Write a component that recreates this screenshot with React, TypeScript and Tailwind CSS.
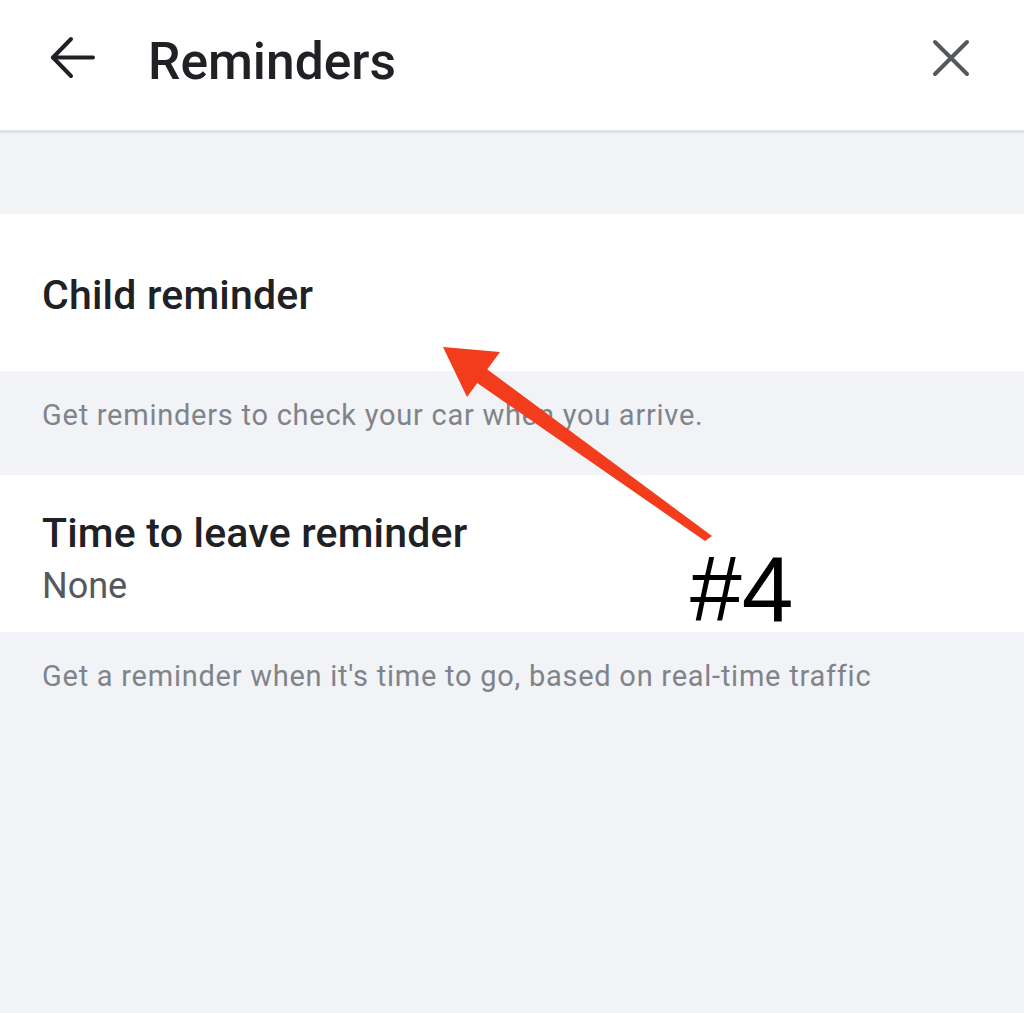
import React from "react";

function Annotation() {
  return (
    <svg
      className="absolute left-0 top-0 pointer-events-none"
      width="1024"
      height="1013"
      viewBox="0 0 1024 1013"
    >
      {/* tapered shaft */}
      <polygon points="712,536 705,541 470,378 480,364" fill="#f23c1c" />
      {/* head */}
      <polygon points="443,347 500,352 467,397" fill="#f23c1c" />
    </svg>
  );
}

export default function App() {
  return (
    <div
      className="relative w-[1024px] h-[1013px] bg-[#f2f3f6] overflow-hidden"
      style={{ fontFamily: "Roboto, 'Noto Sans', sans-serif" }}
    >
      {/* Header */}
      <div className="h-[133px] bg-white flex items-center px-[50px] border-b-[3px] border-[#e0e1e3]">
        <svg width="45" height="45" viewBox="0 0 45 45" fill="none" stroke="#202124" strokeWidth="4" strokeLinecap="round" strokeLinejoin="round" className="mt-[-15px]">
          <path d="M3 22.5H43" />
          <path d="M21 4 3 22.5 21 41" />
        </svg>
        <h1 className="ml-[53px] text-[51.5px] font-medium text-[#202124] mt-[-6px]">
          Reminders
        </h1>
        <div className="flex-1" />
        <svg width="48" height="48" viewBox="0 0 48 48" fill="none" stroke="#55585c" strokeWidth="4" strokeLinecap="round" className="mr-[-1px] mt-[-15px]">
          <path d="M8 8l32 32M40 8 8 40" />
        </svg>
      </div>

      <div className="h-[81px]" />

      {/* Child reminder */}
      <div className="h-[157px] bg-white flex items-center px-[42px]">
        <span className="text-[41px] font-medium text-[#202124] tracking-[0.2px] mt-[6px]">Child reminder</span>
      </div>
      <div className="h-[104px] px-[42px] pt-[24px]">
        <p className="text-[29px] leading-[40px] tracking-[0.75px] text-[#80848a]">
          Get reminders to check your car when you arrive.
        </p>
      </div>

      {/* Time to leave */}
      <div className="h-[157px] bg-white flex flex-col px-[42px] pt-[34px]">
        <span className="text-[41px] font-medium text-[#202124] tracking-[0.2px] leading-[48px]">
          Time to leave reminder
        </span>
        <span className="text-[36px] text-[#55585c] leading-[44px] mt-[7px]">None</span>
      </div>
      <div className="px-[42px] pt-[24px]">
        <p className="text-[29px] leading-[40px] tracking-[0.75px] text-[#80848a]">
          Get a reminder when it's time to go, based on real-time traffic
        </p>
      </div>

      <Annotation />
      <span
        className="absolute left-[690px] top-[543px] text-[93px] leading-none text-black"
        style={{ fontFamily: "'Liberation Sans', Arial, sans-serif" }}
      >
        #4
      </span>
    </div>
  );
}
